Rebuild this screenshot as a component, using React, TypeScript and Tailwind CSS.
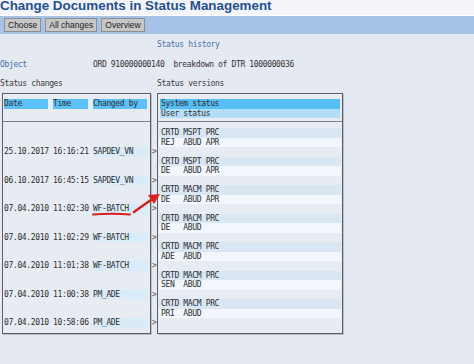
import React from 'react';

const mono = { fontFamily: '"DejaVu Sans Mono", "Liberation Mono", monospace' };

const changes = [
  ['25.10.2017', '16:16:21', 'SAPDEV_VN'],
  ['06.10.2017', '16:45:15', 'SAPDEV_VN'],
  ['07.04.2010', '11:02:30', 'WF-BATCH'],
  ['07.04.2010', '11:02:29', 'WF-BATCH'],
  ['07.04.2010', '11:01:38', 'WF-BATCH'],
  ['07.04.2010', '11:00:38', 'PM_ADE'],
  ['07.04.2010', '10:58:06', 'PM_ADE'],
];

const versions = [
  ['CRTD MSPT PRC', 'REJ  ABUD APR'],
  ['CRTD MSPT PRC', 'DE   ABUD APR'],
  ['CRTD MACM PRC', 'DE   ABUD APR'],
  ['CRTD MACM PRC', 'DE   ABUD'],
  ['CRTD MACM PRC', 'ADE  ABUD'],
  ['CRTD MACM PRC', 'SEN  ABUD'],
  ['CRTD MACM PRC', 'PRI  ABUD'],
];

function Line({ children, className = '' }: { children?: React.ReactNode; className?: string }) {
  return <div className={`flex h-[9.5px] items-center whitespace-pre leading-[9.5px] ${className}`}>{children}</div>;
}

function Box({ header, body, width }: { header: React.ReactNode; body: React.ReactNode; width: string }) {
  return (
    <div className={`${width} border border-[#5b5f66] bg-[#e7ecf3] shadow-[1px_1px_0_#b9c0ca]`}>
      <div className="pt-[5px] pb-[3px]">{header}</div>
      <div className="h-px bg-[#7b8089]" />
      <div className="pt-[6px] pb-[5px]">{body}</div>
    </div>
  );
}

export default function App() {
  return (
    <div
      className="h-[364px] w-[474px] overflow-hidden bg-[#e5e9f1] text-[8px] tracking-[-0.35px] text-[#2e2e2e]"
      style={mono}
    >
      {/* title */}
      <div className="h-[15px] overflow-hidden bg-[#f3f5f9]">
        <div
          className="-mt-[2px] whitespace-nowrap text-[13.4px] font-bold leading-[16px] tracking-normal text-[#25508f]"
          style={{ fontFamily: '"Liberation Sans", Arial, sans-serif' }}
        >
          Change Documents in Status Management
        </div>
      </div>
      <div className="h-px bg-[#ffffff]" />

      {/* toolbar */}
      <div
        className="flex h-[18px] items-center gap-[4px] bg-[#a6c2e7] pl-[4px] tracking-normal"
        style={{ fontFamily: '"Liberation Sans", Arial, sans-serif' }}
      >
        {['Choose', 'All changes', 'Overview'].map((b) => (
          <div
            key={b}
            className="flex h-[14px] items-center border border-[#8e8e8e] bg-[#c7c7c7] px-[3px] text-[8.5px] text-[#1e1e1e]"
          >
            {b}
          </div>
        ))}
      </div>

      {/* header fields */}
      <div className="pt-[6px]">
        <Line className="h-[10px] pl-[157px] text-[#4a72a8]">Status history</Line>
        <div className="mt-[10px] flex h-[10px] items-center">
          <span className="w-[93px] text-[#3f6eb0]">Object</span>
          <span className="whitespace-pre text-[#333]">ORD 910000000140  breakdown of DTR 1000000036</span>
        </div>
        <div className="mt-[9px] flex h-[10px] items-center text-[#3a3a3a]">
          <span className="w-[157px]">Status changes</span>
          <span>Status versions</span>
        </div>
      </div>

      {/* lists */}
      <div className="relative mt-[4px] flex items-start pl-[2px]">
        <Box
          width="w-[149px]"
          header={
            <>
              <Line className="pl-[1px]">
                <span className="mr-[5px] h-[10px] w-[44px] bg-[#5bc0f6]">Date</span>
                <span className="mr-[5px] h-[10px] w-[35px] bg-[#5bc0f6]">Time</span>
                <span className="h-[10px] w-[54px] bg-[#5bc0f6]">Changed by</span>
              </Line>
              <Line />
            </>
          }
          body={changes.map((c, i) => (
            <React.Fragment key={i}>
              <Line />
              <Line />
              <Line className="pl-[1px]">
                <span className="w-[49px]">{c[0]}</span>
                <span className="w-[40px]">{c[1]}</span>
                <span className="w-[55px] bg-[#d9eaf8]">{c[2]}</span>
              </Line>
            </React.Fragment>
          ))}
        />

        {/* row markers */}
        <div className="w-[6px] pt-[35px] pl-[1px] text-[#555]">
          {changes.map((_, i) => (
            <React.Fragment key={i}>
              <Line />
              <Line />
              <Line>&gt;</Line>
            </React.Fragment>
          ))}
        </div>

        <Box
          width="w-[186px]"
          header={
            <div className="mx-[2px]">
              <Line className="bg-[#56bdf5] pl-[1px]">System status</Line>
              <Line className="bg-[#b3def8] pl-[1px]">User status</Line>
            </div>
          }
          body={versions.map((v, i) => (
            <div key={i} className="mx-[1px]">
              <Line className="bg-[#dae7f3] pl-[2px]">{v[0]}</Line>
              <Line className="bg-[#f1f7fc] pl-[2px]">{v[1]}</Line>
              <Line />
            </div>
          ))}
        />

        {/* red annotation */}
        <svg className="pointer-events-none absolute left-0 top-0" width="200" height="140" viewBox="0 93 200 140">
          <path d="M93 214.5 Q112 213 130 214.5" stroke="#d8201c" strokeWidth="2" fill="none" strokeLinecap="round" />
          <path d="M134 212 Q142 206 151 200" stroke="#d8201c" strokeWidth="2.5" fill="none" strokeLinecap="round" />
          <polygon points="160,194 148,195 154,204" fill="#d8201c" />
        </svg>
      </div>
    </div>
  );
}
